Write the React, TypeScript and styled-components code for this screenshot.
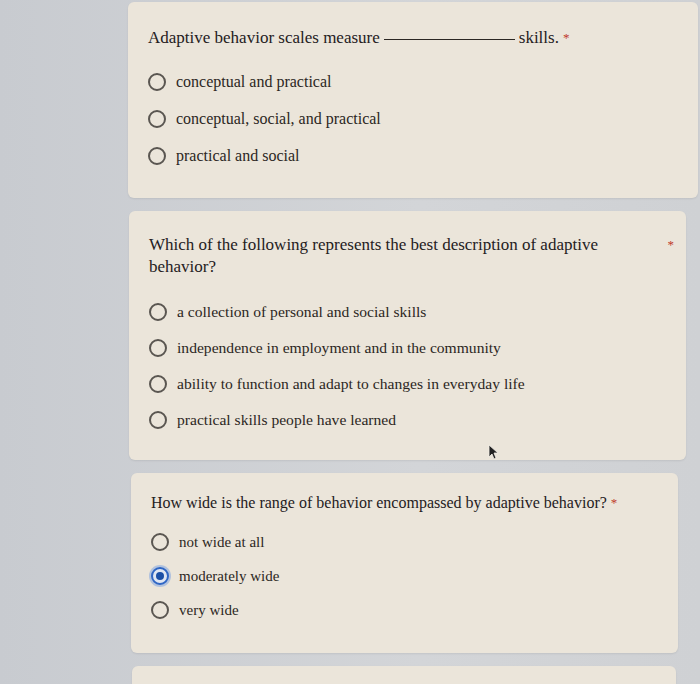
import React from 'react';
import styled, { createGlobalStyle } from 'styled-components';

const GlobalStyle = createGlobalStyle`
  html, body {
    margin: 0;
    padding: 0;
    background: #cdd0d4;
  }
  body {
    font-family: 'Liberation Serif', 'Times New Roman', serif;
    color: #2b2723;
    overflow: hidden;
  }
`;

const Page = styled.div`
  position: relative;
  width: 700px;
  height: 684px;
  overflow: hidden;
  background: linear-gradient(90deg, #c8cbd0 0%, #d3d5d8 60%, #cfd1d4 100%);
  display: flex;
  flex-direction: column;
  gap: 13px;
  padding: 2px 0 0 129px;
  box-sizing: border-box;
`;

const Card = styled.div<{ $width: number; $height: number; $top: number; $left?: number }>`
  width: ${(p) => p.$width}px;
  min-height: ${(p) => p.$height}px;
  margin-left: ${(p) => p.$left ?? 0}px;
  flex-shrink: 0;
  box-sizing: border-box;
  padding: ${(p) => p.$top}px 20px 0 20px;
  background: #ebe5da;
  border-radius: 6px;
  box-shadow: 0 1px 2px rgba(0, 0, 0, 0.08);
`;

const Title = styled.div<{ $size: number; $gap: number }>`
  position: relative;
  font-size: ${(p) => p.$size}px;
  line-height: 22px;
  color: #24201d;
  margin-bottom: ${(p) => p.$gap}px;
  white-space: nowrap;
`;

const Blank = styled.span`
  display: inline-block;
  width: 131px;
  border-bottom: 1px solid #2b2723;
  margin: 0 4px 0 4px;
  transform: translateY(-3px);
`;

const Star = styled.span`
  color: #c0392b;
  font-size: 13px;
  vertical-align: top;
  margin-left: 4px;
`;

const CornerStar = styled(Star)`
  position: absolute;
  right: -8px;
  top: 0;
`;

const Options = styled.div<{ $gap: number }>`
  display: flex;
  flex-direction: column;
  gap: ${(p) => p.$gap}px;
`;

const Option = styled.label<{ $size: number }>`
  display: flex;
  align-items: center;
  gap: 10px;
  height: 20px;
  font-size: ${(p) => p.$size}px;
  color: #2b2723;
`;

const Radio = styled.span<{ $checked?: boolean }>`
  width: 14px;
  height: 14px;
  border-radius: 50%;
  border: 2px solid ${(p) => (p.$checked ? '#2f66c4' : '#5a5651')};
  display: flex;
  align-items: center;
  justify-content: center;
  flex-shrink: 0;
  box-shadow: ${(p) => (p.$checked ? '0 0 0 2px rgba(130, 165, 225, 0.55)' : 'none')};
  background: ${(p) => (p.$checked ? '#dfe6f3' : 'transparent')};

  &::after {
    content: '';
    display: ${(p) => (p.$checked ? 'block' : 'none')};
    width: 8px;
    height: 8px;
    border-radius: 50%;
    background: #1b4fa6;
  }
`;

const Cursor = styled.svg`
  position: absolute;
  left: 487px;
  top: 444px;
`;

type Q = {
  options: string[];
  checked?: number;
  gap: number;
  size: number;
};

const OptionList = ({ options, checked, gap, size }: Q) => (
  <Options $gap={gap}>
    {options.map((o, i) => (
      <Option key={o} $size={size}>
        <Radio $checked={checked === i} />
        {o}
      </Option>
    ))}
  </Options>
);

const App = () => {
  return (
    <>
      <GlobalStyle />
      <Page>
        <Card $width={570} $height={196} $top={25} $left={-1}>
          <Title $size={17} $gap={23}>
            Adaptive behavior scales measure
            <Blank />
            skills.
            <Star>*</Star>
          </Title>
          <OptionList
            gap={17}
            size={16}
            options={['conceptual and practical', 'conceptual, social, and practical', 'practical and social']}
          />
        </Card>

        <Card $width={557} $height={249} $top={23}>
          <Title $size={17} $gap={24}>
            Which of the following represents the best description of adaptive
            <br />
            behavior?
            <CornerStar>*</CornerStar>
          </Title>
          <OptionList
            gap={16}
            size={15.6}
            options={[
              'a collection of personal and social skills',
              'independence in employment and in the community',
              'ability to function and adapt to changes in everyday life',
              'practical skills people have learned',
            ]}
          />
        </Card>

        <Card $width={547} $height={180} $top={19} $left={2}>
          <Title $size={16} $gap={18}>
            How wide is the range of behavior encompassed by adaptive behavior?
            <Star>*</Star>
          </Title>
          <OptionList gap={14} size={15} checked={1} options={['not wide at all', 'moderately wide', 'very wide']} />
        </Card>

        <Card $width={544} $height={60} $top={20} $left={3} />

        <Cursor width="12" height="16" viewBox="0 0 12 16">
          <path d="M2 1 L2 13 L5 10 L7 15 L9 14 L7 9 L11 9 Z" fill="#222" stroke="#f4f0e8" strokeWidth="0.8" />
        </Cursor>
      </Page>
    </>
  );
};

export default App;
